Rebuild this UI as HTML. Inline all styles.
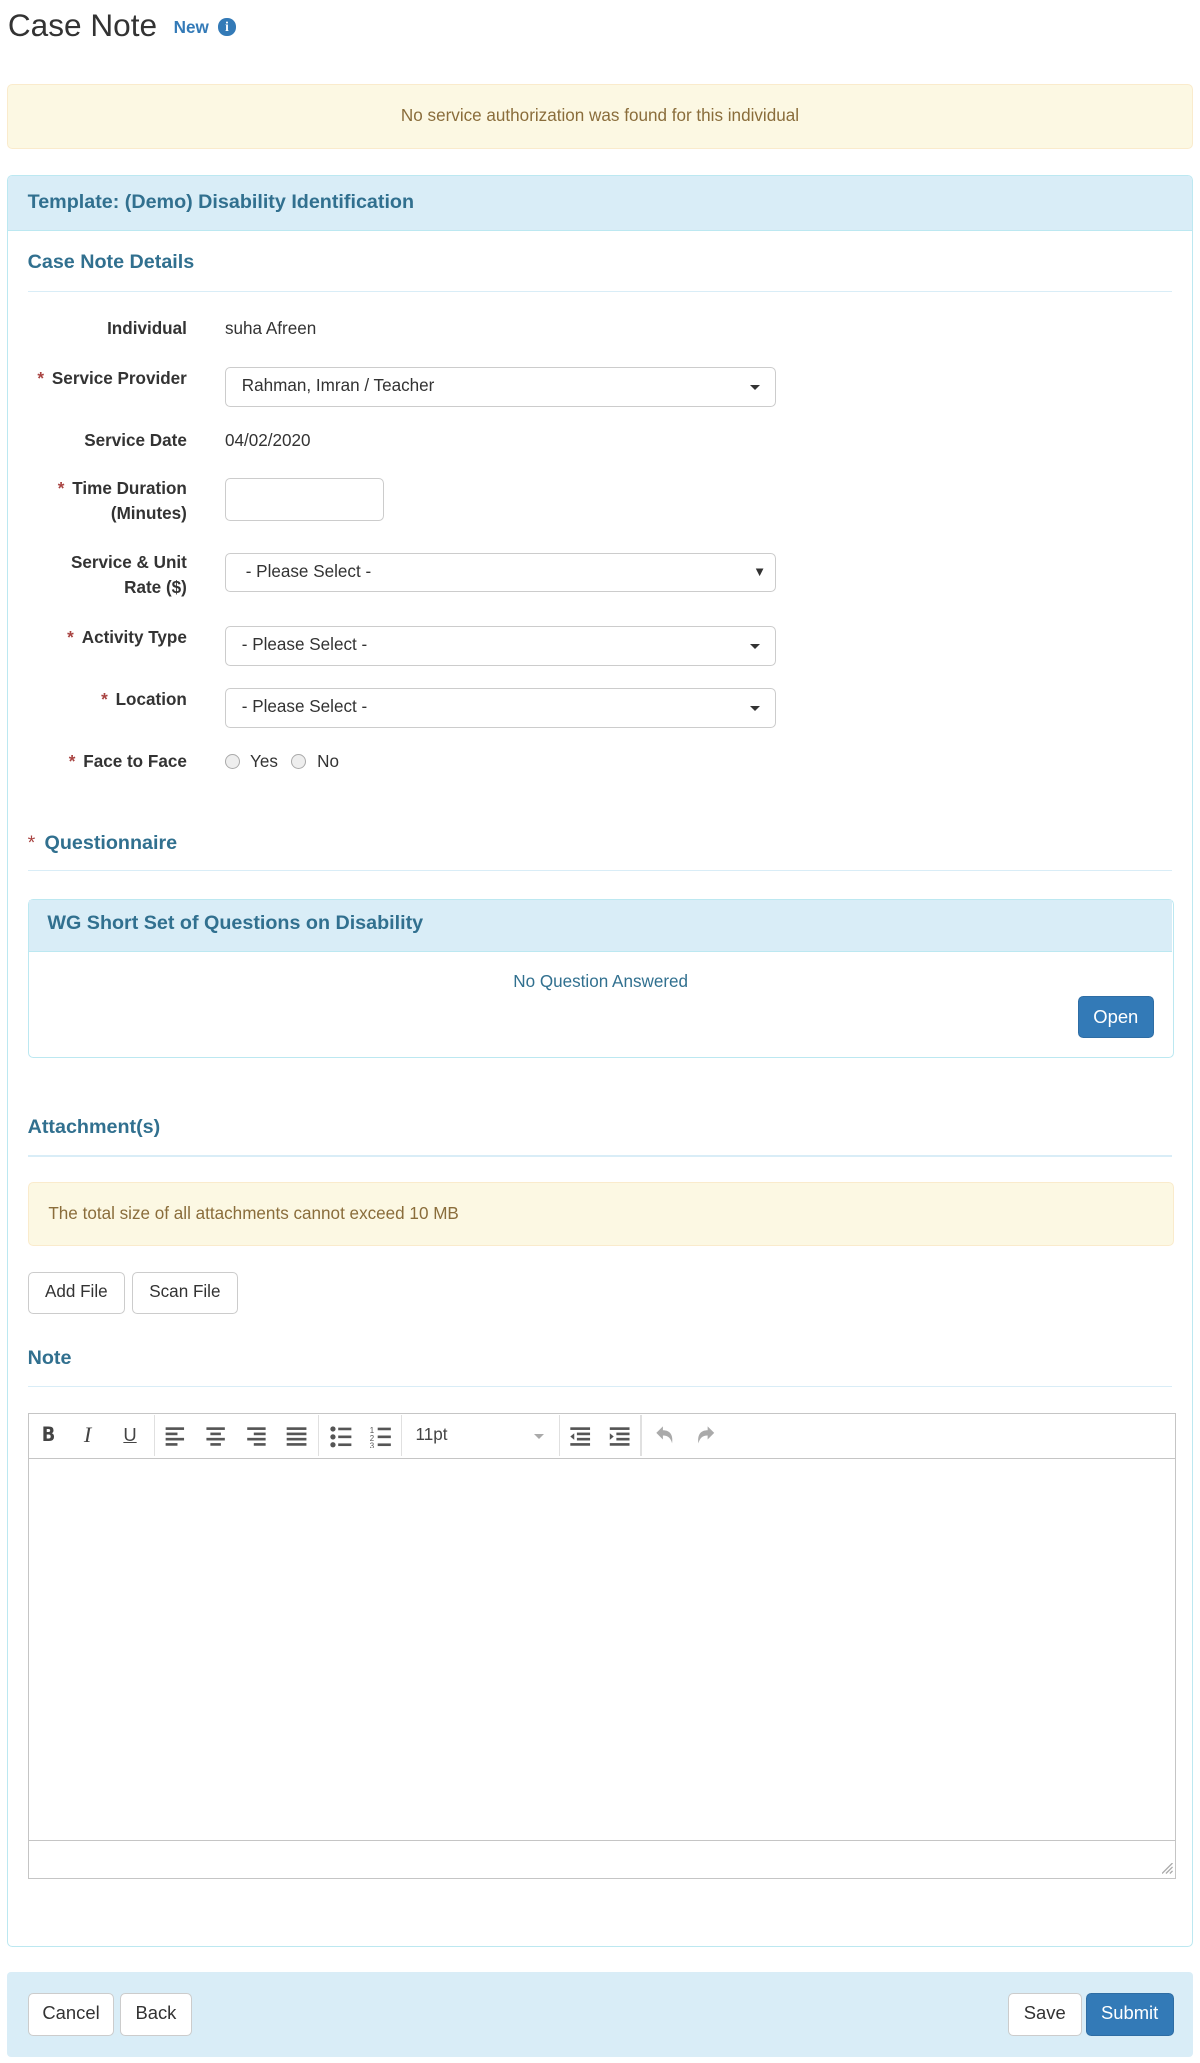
<!DOCTYPE html>
<html><head><meta charset="utf-8"><style>
html,body{margin:0;padding:0;background:#fff;}
#w{zoom:1.31579;width:912px;height:1568px;position:relative;overflow:hidden;font-family:"Liberation Sans",Arial,sans-serif;color:#333;font-size:13px;}
.a{position:absolute;}
.h{color:#31708f;font-weight:bold;font-size:15px;}
.hr{position:absolute;height:1px;background:#d9edf7;}
.lbl{position:absolute;right:770px;font-weight:bold;text-align:right;line-height:19px;}
.st{color:#a94442;margin-right:6px;}
.sel{position:absolute;left:171px;width:419px;height:30px;border:1px solid #ccc;border-radius:4px;box-sizing:border-box;padding-left:12px;line-height:28px;}
.car{position:absolute;right:12px;top:13px;border-left:4px solid transparent;border-right:4px solid transparent;border-top:4px solid #333;}
.btn{position:absolute;border:1px solid #ccc;border-radius:4px;box-sizing:border-box;text-align:center;background:#fff;line-height:29px;font-size:13px;}
.pri{background:#337ab7;border-color:#2e6da4;color:#fff;}
.tb{position:absolute;top:0;height:32px;line-height:32px;color:#444;font-size:15px;}
.sep{position:absolute;top:1px;width:1px;height:31px;background:#e0e0e0;}
</style></head><body><div id="w">
<div class="a" style="left:6px;top:5px;font-size:24px;color:#333;">Case Note</div>
<div class="a" style="left:132px;top:14px;font-size:13px;font-weight:bold;color:#337ab7;">New</div>
<div class="a" style="left:166px;top:14px;width:13px;height:13px;border-radius:50%;background:#337ab7;color:#fff;font-size:10px;font-weight:bold;text-align:center;line-height:13px;font-family:'Liberation Serif',serif;">i</div>

<div class="a" style="left:5px;top:64px;width:902px;height:49px;box-sizing:border-box;background:#fcf8e3;border:1px solid #faebcc;border-radius:4px;color:#8a6d3b;text-align:center;line-height:47px;">No service authorization was found for this individual</div>

<div class="a" style="left:5px;top:133px;width:902px;height:1347px;box-sizing:border-box;border:1px solid #bce8f1;border-radius:4px;"></div>
<div class="a" style="left:6px;top:134px;width:900px;height:41px;background:#d9edf7;border-bottom:1px solid #bce8f1;border-radius:3px 3px 0 0;"></div>
<div class="a h" style="left:21px;top:145px;">Template: (Demo) Disability Identification</div>

<div class="a h" style="left:21px;top:191px;">Case Note Details</div>
<div class="hr" style="left:21px;top:221px;width:870px;"></div>

<div class="lbl" style="top:240px;">Individual</div><div class="a" style="left:171px;top:240px;line-height:19px;">suha Afreen</div>
<div class="lbl" style="top:278px;"><span class="st">*</span>Service Provider</div>
<div class="sel" style="top:279px;">Rahman, Imran / Teacher<div class="car"></div></div>
<div class="lbl" style="top:325px;">Service Date</div><div class="a" style="left:171px;top:325px;line-height:19px;">04/02/2020</div>
<div class="lbl" style="top:362px;"><span class="st">*</span>Time Duration<br>(Minutes)</div>
<div class="a" style="left:171px;top:363px;width:121px;height:33px;border:1px solid #ccc;border-radius:4px;box-sizing:border-box;"></div>
<div class="lbl" style="top:418px;">Service &amp; Unit<br>Rate ($)</div>
<div class="sel" style="top:420px;padding-left:15px;">- Please Select -<div class="a" style="right:7px;top:0;font-size:10px;">▼</div></div>
<div class="lbl" style="top:475px;"><span class="st">*</span>Activity Type</div>
<div class="sel" style="top:476px;">- Please Select -<div class="car"></div></div>
<div class="lbl" style="top:522px;"><span class="st">*</span>Location</div>
<div class="sel" style="top:523px;">- Please Select -<div class="car"></div></div>
<div class="lbl" style="top:569px;"><span class="st">*</span>Face to Face</div>
<div class="a" style="left:171px;top:573px;width:10px;height:10px;border-radius:50%;border:1px solid #aaa;background:#eee;"></div>
<div class="a" style="left:190px;top:569px;line-height:19px;">Yes</div>
<div class="a" style="left:221px;top:573px;width:10px;height:10px;border-radius:50%;border:1px solid #aaa;background:#eee;"></div>
<div class="a" style="left:241px;top:569px;line-height:19px;">No</div>

<div class="a h" style="left:21px;top:632px;"><span style="color:#a94442;font-weight:normal;margin-right:7px;">*</span>Questionnaire</div>
<div class="hr" style="left:21px;top:661px;width:870px;"></div>

<div class="a" style="left:21px;top:683px;width:871px;height:121px;box-sizing:border-box;border:1px solid #bce8f1;border-radius:4px;"></div>
<div class="a" style="left:22px;top:684px;width:869px;height:39px;background:#d9edf7;border-bottom:1px solid #bce8f1;"></div>
<div class="a h" style="left:36px;top:693px;">WG Short Set of Questions on Disability</div>
<div class="a" style="left:21px;top:739px;width:871px;text-align:center;color:#31708f;">No Question Answered</div>
<div class="btn pri" style="left:819px;top:757px;width:58px;height:32px;line-height:30px;font-size:14px;">Open</div>

<div class="a h" style="left:21px;top:848px;">Attachment(s)</div>
<div class="hr" style="left:21px;top:878px;width:870px;"></div>
<div class="a" style="left:21px;top:898px;width:871px;height:49px;box-sizing:border-box;background:#fcf8e3;border:1px solid #faebcc;border-radius:4px;color:#8a6d3b;line-height:47px;padding-left:15px;">The total size of all attachments cannot exceed 10 MB</div>
<div class="btn" style="left:21px;top:967px;width:74px;height:32px;">Add File</div>
<div class="btn" style="left:100px;top:967px;width:81px;height:32px;">Scan File</div>

<div class="a h" style="left:21px;top:1024px;">Note</div>
<div class="hr" style="left:21px;top:1053px;width:870px;"></div>

<div class="a" style="left:21px;top:1074px;width:873px;height:354px;box-sizing:border-box;border:1px solid #c5c5c5;">
 <div class="a" style="left:0;top:0;width:871px;height:33px;border-bottom:1px solid #c5c5c5;">
  <div class="tb" style="left:10px;font-weight:bold;font-family:'DejaVu Sans Condensed','DejaVu Sans',sans-serif;">B</div>
  <div class="tb" style="left:42px;font-style:italic;font-family:'Liberation Serif',serif;font-size:17px;">I</div>
  <div class="tb" style="left:72px;text-decoration:underline;font-size:14px;">U</div>
  <div class="sep" style="left:95px;"></div>
  <svg class="a" style="left:102px;top:9px" width="130" height="16"><g fill="#555">
   <rect x="2" y="1" width="14" height="2"/><rect x="2" y="5" width="9" height="2"/><rect x="2" y="9" width="14" height="2"/><rect x="2" y="13" width="9" height="2"/>
   <rect x="33" y="1" width="14" height="2"/><rect x="36" y="5" width="8" height="2"/><rect x="33" y="9" width="14" height="2"/><rect x="36" y="13" width="8" height="2"/>
   <rect x="64" y="1" width="14" height="2"/><rect x="69" y="5" width="9" height="2"/><rect x="64" y="9" width="14" height="2"/><rect x="69" y="13" width="9" height="2"/>
   <rect x="94" y="1" width="15" height="2"/><rect x="94" y="5" width="15" height="2"/><rect x="94" y="9" width="15" height="2"/><rect x="94" y="13" width="15" height="2"/>
  </g></svg>
  <div class="sep" style="left:220px;"></div>
  <svg class="a" style="left:228px;top:8px" width="50" height="18"><g fill="#555">
   <circle cx="3" cy="3" r="2"/><circle cx="3" cy="9" r="2"/><circle cx="3" cy="15" r="2"/>
   <rect x="7" y="2" width="10" height="2"/><rect x="7" y="8" width="10" height="2"/><rect x="7" y="14" width="10" height="2"/>
   <rect x="37" y="2" width="10" height="2"/><rect x="37" y="8" width="10" height="2"/><rect x="37" y="14" width="10" height="2"/>
   <text x="31" y="6" font-size="6" font-family="Liberation Sans">1</text><text x="31" y="12" font-size="6" font-family="Liberation Sans">2</text><text x="31" y="18" font-size="6" font-family="Liberation Sans">3</text>
  </g></svg>
  <div class="sep" style="left:283px;"></div>
  <div class="tb" style="left:294px;font-size:13px;">11pt</div>
  <div class="a" style="left:384px;top:15px;border-left:4px solid transparent;border-right:4px solid transparent;border-top:4px solid #aaa;"></div>
  <div class="sep" style="left:403px;"></div>
  <svg class="a" style="left:411px;top:9px" width="50" height="16"><g fill="#555">
   <rect x="1" y="1" width="15" height="2"/><rect x="6" y="5" width="10" height="2"/><rect x="6" y="9" width="10" height="2"/><rect x="1" y="13" width="15" height="2"/><path d="M1 8 L4 5.5 L4 10.5Z"/>
   <rect x="31" y="1" width="15" height="2"/><rect x="36" y="5" width="10" height="2"/><rect x="36" y="9" width="10" height="2"/><rect x="31" y="13" width="15" height="2"/><path d="M34 8 L31 5.5 L31 10.5Z"/>
  </g></svg>
  <div class="sep" style="left:465px;"></div>
  <svg class="a" style="left:476px;top:8px" width="50" height="16"><g fill="#aaa">
   <path d="M1 6 L6 1 L6 4 C11 4 14 7 13 14 C12 10 10 8 6 8 L6 11Z"/>
   <path d="M45 6 L40 1 L40 4 C35 4 32 7 33 14 C34 10 36 8 40 8 L40 11Z"/>
  </g></svg>
 </div>
 <div class="a" style="left:0;top:324px;width:871px;height:28px;border-top:1px solid #c5c5c5;"></div>
 <svg class="a" style="right:2px;bottom:3px" width="8" height="8"><path d="M8 0 L0 8 M8 3 L3 8 M8 6 L6 8" stroke="#aaa"/></svg>
</div>

<div class="a" style="left:5px;top:1499px;width:902px;height:64px;background:#d9edf7;border-radius:3px;"></div>
<div class="btn" style="left:21px;top:1515px;width:66px;height:32px;font-size:14px;">Cancel</div>
<div class="btn" style="left:91px;top:1515px;width:55px;height:32px;font-size:14px;">Back</div>
<div class="btn" style="left:766px;top:1515px;width:56px;height:32px;font-size:14px;">Save</div>
<div class="btn pri" style="left:825px;top:1515px;width:67px;height:32px;font-size:14px;">Submit</div>
</div></body></html>
